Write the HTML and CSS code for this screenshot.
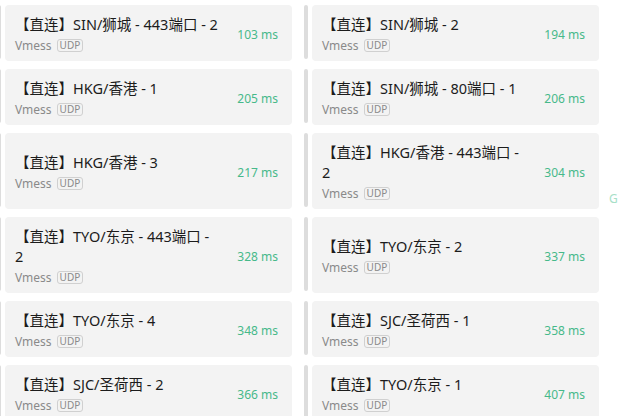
FILE: index.html
```html
<!DOCTYPE html>
<html lang="zh-CN">
<head>
<meta charset="utf-8">
<title>节点列表</title>
<link rel="stylesheet" href="styles.css">
</head>
<body>
<div class="grid">
  <div class="cell"><div class="bar"></div><div class="card"><div class="info"><div class="name">【直连】SIN/狮城 - 443端口 - 2</div><div class="meta"><span class="type">Vmess</span><span class="tag">UDP</span></div></div><div class="delay">103 ms</div></div></div>
  <div class="cell"><div class="bar"></div><div class="card"><div class="info"><div class="name">【直连】SIN/狮城 - 2</div><div class="meta"><span class="type">Vmess</span><span class="tag">UDP</span></div></div><div class="delay">194 ms</div></div></div>
  <div class="cell"><div class="bar"></div><div class="card"><div class="info"><div class="name">【直连】HKG/香港 - 1</div><div class="meta"><span class="type">Vmess</span><span class="tag">UDP</span></div></div><div class="delay">205 ms</div></div></div>
  <div class="cell"><div class="bar"></div><div class="card"><div class="info"><div class="name">【直连】SIN/狮城 - 80端口 - 1</div><div class="meta"><span class="type">Vmess</span><span class="tag">UDP</span></div></div><div class="delay">206 ms</div></div></div>
  <div class="cell"><div class="bar"></div><div class="card"><div class="info"><div class="name">【直连】HKG/香港 - 3</div><div class="meta"><span class="type">Vmess</span><span class="tag">UDP</span></div></div><div class="delay">217 ms</div></div></div>
  <div class="cell"><div class="bar"></div><div class="card"><div class="info"><div class="name">【直连】HKG/香港 - 443端口 - 2</div><div class="meta"><span class="type">Vmess</span><span class="tag">UDP</span></div></div><div class="delay">304 ms</div></div></div>
  <div class="cell"><div class="bar"></div><div class="card"><div class="info"><div class="name">【直连】TYO/东京 - 443端口 - 2</div><div class="meta"><span class="type">Vmess</span><span class="tag">UDP</span></div></div><div class="delay">328 ms</div></div></div>
  <div class="cell"><div class="bar"></div><div class="card"><div class="info"><div class="name">【直连】TYO/东京 - 2</div><div class="meta"><span class="type">Vmess</span><span class="tag">UDP</span></div></div><div class="delay">337 ms</div></div></div>
  <div class="cell"><div class="bar"></div><div class="card"><div class="info"><div class="name">【直连】TYO/东京 - 4</div><div class="meta"><span class="type">Vmess</span><span class="tag">UDP</span></div></div><div class="delay">348 ms</div></div></div>
  <div class="cell"><div class="bar"></div><div class="card"><div class="info"><div class="name">【直连】SJC/圣荷西 - 1</div><div class="meta"><span class="type">Vmess</span><span class="tag">UDP</span></div></div><div class="delay">358 ms</div></div></div>
  <div class="cell"><div class="bar"></div><div class="card"><div class="info"><div class="name">【直连】SJC/圣荷西 - 2</div><div class="meta"><span class="type">Vmess</span><span class="tag">UDP</span></div></div><div class="delay">366 ms</div></div></div>
  <div class="cell"><div class="bar"></div><div class="card"><div class="info"><div class="name">【直连】TYO/东京 - 1</div><div class="meta"><span class="type">Vmess</span><span class="tag">UDP</span></div></div><div class="delay">407 ms</div></div></div>
</div>
<div class="edge">G</div>
</body>
</html>
```
FILE: styles.css
```css
html, body {
  margin: 0;
  padding: 0;
  overflow: hidden;
  background: #ffffff;
  font-family: "Noto Sans", "Noto Sans CJK SC", sans-serif;
}

body {
  position: relative;
  width: 626px;
  height: 416px;
}

.grid {
  display: grid;
  grid-template-columns: 295px 295px;
  column-gap: 12px;
  row-gap: 8px;
  margin: 5px 0 0 -3px;
}

.cell {
  display: flex;
  gap: 4px;
}

.bar {
  width: 4px;
  flex-shrink: 0;
  margin-bottom: 2px;
  border-radius: 2px;
  background: #dddddd;
}

.card {
  flex: 1;
  display: flex;
  align-items: center;
  padding: 9px 14px 7px 10px;
  background: #f3f3f3;
  border-radius: 4px;
}

.info {
  flex: 1;
  min-width: 0;
  display: flex;
  flex-direction: column;
  justify-content: center;
}

.name {
  font-size: 14.5px;
  line-height: 20px;
  color: #1c1c1c;
  max-width: 205px;
}

.meta {
  display: flex;
  align-items: center;
  gap: 5px;
  height: 18px;
  margin-top: 2px;
}

.type {
  font-size: 12px;
  color: #8a8a8a;
}

.tag {
  font-size: 10px;
  line-height: 11px;
  padding: 0 2px;
  color: #8a8a8a;
  border: 1px solid #d0d0d0;
  border-radius: 3px;
}

.delay {
  flex-shrink: 0;
  margin-left: 12px;
  font-size: 12px;
  color: #46b98a;
}

.edge {
  position: absolute;
  left: 609px;
  top: 190px;
  font-size: 12px;
  color: #a6e0c7;
}
```
